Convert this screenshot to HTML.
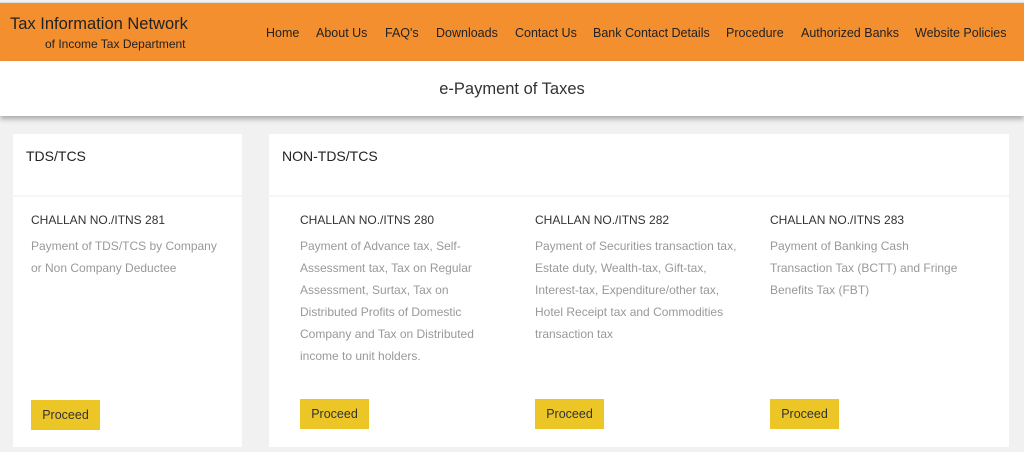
<!DOCTYPE html>
<html><head><style>
body{margin:0;width:1024px;height:452px;background:#f1f1f1;font-family:"Liberation Sans",sans-serif;overflow:hidden;position:relative}
.hdr{position:absolute;top:2px;left:0;width:1024px;height:59px;background:#f48f2f;border-top:1px solid #ddd}
.logo1{position:absolute;left:10px;top:12px;font-size:16.5px;color:#222}
.logo2{position:absolute;left:45px;top:34px;font-size:12px;color:#222}
.nav{position:absolute;top:23px;font-size:12.5px;color:#222}
.tb{position:absolute;top:61px;left:0;width:1024px;height:55px;background:#fff;box-shadow:0 3px 5px rgba(0,0,0,.3)}
.tb div{position:absolute;left:0;width:1024px;text-align:center;top:19px;font-size:16.5px;color:#333}
.card{position:absolute;top:134px;height:313px;background:#fff}
.card .h{position:absolute;left:13px;top:14px;font-size:14px;color:#222}
.card .line{position:absolute;left:0;right:0;top:61px;height:2px;background:#f6f6f6}
.col{position:absolute;top:79px;width:215px}
.col .t{font-size:12px;color:#333}
.col .d{font-size:12px;color:#999;line-height:22px;margin-top:8px}
.btn{position:absolute;background:#ecc526;color:#333;font-size:12.5px;width:69px;height:30px;line-height:30px;text-align:center}
</style></head><body>
<div class="hdr">
<div class="logo1">Tax Information Network</div>
<div class="logo2">of Income Tax Department</div>
<span class="nav" style="left:266px">Home</span>
<span class="nav" style="left:316px">About Us</span>
<span class="nav" style="left:385px">FAQ's</span>
<span class="nav" style="left:436px">Downloads</span>
<span class="nav" style="left:515px">Contact Us</span>
<span class="nav" style="left:593px">Bank Contact Details</span>
<span class="nav" style="left:726px">Procedure</span>
<span class="nav" style="left:801px">Authorized Banks</span>
<span class="nav" style="left:915px">Website Policies</span>
</div>
<div class="tb"><div>e-Payment of Taxes</div></div>
<div class="card" style="left:13px;width:229px">
<div class="h">TDS/TCS</div><div class="line"></div>
<div class="col" style="left:18px;width:192px"><div class="t">CHALLAN NO./ITNS 281</div><div class="d">Payment of TDS/TCS by Company or Non Company Deductee</div></div>
<div class="btn" style="left:18px;top:266px">Proceed</div>
</div>
<div class="card" style="left:269px;width:740px">
<div class="h">NON-TDS/TCS</div><div class="line"></div>
<div class="col" style="left:31px;width:185px"><div class="t">CHALLAN NO./ITNS 280</div><div class="d">Payment of Advance tax, Self-Assessment tax, Tax on Regular Assessment, Surtax, Tax on Distributed Profits of Domestic Company and Tax on Distributed income to unit holders.</div></div>
<div class="col" style="left:266px;width:212px"><div class="t">CHALLAN NO./ITNS 282</div><div class="d">Payment of Securities transaction tax, Estate duty, Wealth-tax, Gift-tax, Interest-tax, Expenditure/other tax, Hotel Receipt tax and Commodities transaction tax</div></div>
<div class="col" style="left:501px;width:200px"><div class="t">CHALLAN NO./ITNS 283</div><div class="d">Payment of Banking Cash Transaction Tax (BCTT) and Fringe Benefits Tax (FBT)</div></div>
<div class="btn" style="left:31px;top:265px">Proceed</div>
<div class="btn" style="left:266px;top:265px">Proceed</div>
<div class="btn" style="left:501px;top:265px">Proceed</div>
</div>
</body></html>
